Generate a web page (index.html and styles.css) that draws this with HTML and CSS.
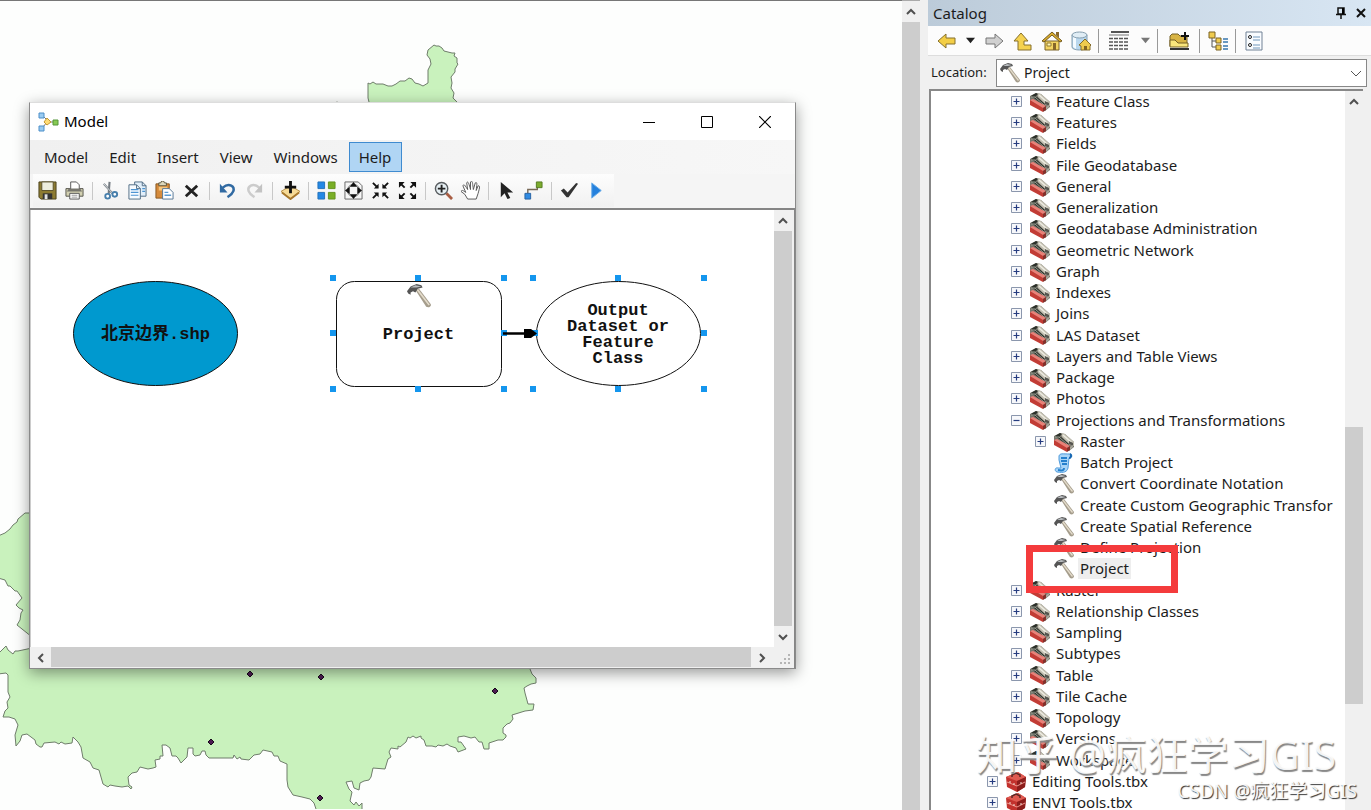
FILE: index.html
```html
<!DOCTYPE html>
<html lang="en">
<head>
<meta charset="utf-8">
<title>Model</title>
<link rel="stylesheet" href="styles.css">
</head>
<body>
<svg class="sprite" aria-hidden="true">
  <symbol id="toolset" viewBox="0 0 20 20">
    <path d="M0 4l6-3 5 1 9 8v5l-5 4L0 11z" fill="#77766c"/>
    <path d="M7 1l4 1 9 8v4l-4-1L8 5z" fill="#c3c0b2"/>
    <path d="M1 4l5-3 2 1-4 4zM4 6l3-1 8 7-2 1z" fill="#2c302a"/>
    <path d="M1 5l4 0 9 8" stroke="#9aa094" fill="none"/>
    <path d="M9 3l8 7" stroke="#eeece2" stroke-width="1.500"/><path d="M15 9l4 2v3l-4-2z" fill="#55554f"/>
    <path d="M0 8l13 7v5L0 13z" fill="#c23c35"/><path d="M0 8l3-1 13 7-3 2z" fill="#e98178"/><path d="M13 16l3-2v4l-3 2z" fill="#84302b"/><path d="M16 15l3-2v2l-3 3z" fill="#a8a69b"/>
  </symbol>
  <symbol id="hammer" viewBox="0 0 20 20">
    <path d="M7 5l3-1 10 13c0 2-2 3-4 2z" fill="#a59d8c"/><path d="M8 5l1-1 10 13-1 1z" fill="#e4dccb"/>
    <path d="M0 6l3-4 5-2 4 1 1 2-4 1-2 3-2-1-2 1v2L1 8z" fill="#555"/><path d="M3 3l4-2 5 1-4 1z" fill="#b8bcbf"/>
  </symbol>
  <symbol id="script" viewBox="0 0 20 20">
    <path d="M5 3c1-3 3-2 11-2 3 1 2 4-1 4l-1 10c-1 4-4 5-11 4-3-1-2-5 1-4h3L5 7z" fill="#a9d5f7" stroke="#4e9bdc"/>
    <path d="M7 5h6M7 8h6M8 11h5M4 17c5 1 6 0 6-2" stroke="#2580cd" stroke-width="2" fill="none"/><path d="M16 1c2 1 1 4-1 4" stroke="#1767b2" stroke-width="2" fill="none"/>
  </symbol>
  <symbol id="toolbox" viewBox="0 0 20 20">
    <path d="M0 5l12-5 8 5-1 10-8 5L1 15z" fill="#c2322d"/><path d="M0 5l12-5 8 5-9 4z" fill="#df5a51"/><path d="M11 9l9-4-1 10-8 5z" fill="#8b1d1b"/>
    <path d="M6 5V3l4-2 4 2v2" fill="none" stroke="#5c2826" stroke-width="1.500"/><path d="M1 10l10 4 8-4" stroke="#ef938a" fill="none"/><path d="M4 9v2M8 11v2M15 10v2" stroke="#eee0d8"/>
  </symbol>
  <symbol id="plus" viewBox="0 0 11 11"><path d="M.5.5h10v10H.5z" fill="#f7f8fb" stroke="#8b97ad"/><path d="M2.500 5.500h6M5.500 2.500v6" stroke="#263c80" stroke-width="1.200"/></symbol>
  <symbol id="minus" viewBox="0 0 11 11"><path d="M.5.5h10v10H.5z" fill="#f7f8fb" stroke="#8b97ad"/><path d="M2.500 5.500h6" stroke="#263c80" stroke-width="1.200"/></symbol>
  <symbol id="up" viewBox="0 0 12 12"><path d="M2 8l4-4 4 4" fill="none" stroke="#505050" stroke-width="2"/></symbol>
  <symbol id="down" viewBox="0 0 12 12"><path d="M2 4l4 4 4-4" fill="none" stroke="#505050" stroke-width="2"/></symbol>
  <symbol id="left" viewBox="0 0 12 12"><path d="M8 2L4 6l4 4" fill="none" stroke="#505050" stroke-width="2"/></symbol>
  <symbol id="right" viewBox="0 0 12 12"><path d="M4 2l4 4-4 4" fill="none" stroke="#505050" stroke-width="2"/></symbol>
</svg>

<div class="app">
  <main class="map">
    <svg class="land" aria-label="Map">
      <g fill="#c9f2bd" stroke="#6f7d6b">
        <path d="M370 106L368 98 368 83 370 84 373 82 376 84 383 84 388 86 392 86 396 84 400 81 405 81 409 78 412 79 415 83 419 84 423 86 428 83 428 70 431 64 430 59 427 55 428 50 434 45 436 46 439 46 442 48 444 51 452 53 455 53 454 56 457 58 457 63 458 64 455 69 455 72 451 77 452 83 451 88 454 93 453 98 458 103V108z"/>
        <path d="M32 513H25L18 519 17 522 13 525 10 529 5 533-2 536V578L5 580 8 586 10 586 15 591 17 591 22 598 16 605 19 608 23 610 21 613 20 620 17 625 22 629 32 637z"/>
        <path d="M-2 652L0 652 3 649 6 646 8 650 13 654 15 651 18 651 32 648V660H530V669L532 674 536 678 536 683 531 684 527 686 524 688 525 693 528 704 534 704 533 710 525 711 512 715 513 719 510 723 507 724 503 728 503 733 506 735 506 737 503 740 498 740 489 743 489 749 484 749 482 742 479 742 475 737 471 738 464 736 458 737 458 742 461 742 466 749 458 752 456 748 450 746 447 744 443 746 438 745 436 747 432 746 426 746 424 740 421 738 421 736 416 738 413 736 410 738 408 737 406 742 400 747 398 746 398 749 391 748 389 752 391 757 388 759 385 769 373 768 371 777 369 780 364 781 360 783 359 790 354 788 352 781 346 782 349 789 352 792 350 801 354 805 356 802 359 806 362 803V812H317L314 803 310 799 302 797 293 795 288 787 287 780V764L280 761 278 756 274 756 272 752 263 750 260 754 254 755 249 760 241 759 240 757 237 759 234 755 233 758H209L206 755 205 751 202 751 200 755 195 756 193 754 193 748 188 748 187 757 184 760 181 763 178 758 176 756 172 756 170 748 166 745 162 745 163 756 160 756 160 759 155 760 156 767 153 768 148 769 140 767 137 772 132 773 128 777 129 785 132 787 131 789 128 786 122 787 115 786 110 785 108 787 103 784 99 770 93 768 90 762 83 758 81 747 78 742 73 737 72 743 65 744 61 742 59 744 55 742 44 743 42 747 40 747 36 744 35 740 27 734 22 735 20 741 16 746 15 735 18 725 15 719 9 717 3 717 5 711 8 708 7 702 10 697 8 692 8 675 6 673-2 674z"/>
      </g>
      <path d="M335 104q2-4 4 0" fill="none" stroke="#6f7d6b"/>
      <g fill="#4d1b52" stroke="#17091a">
        <path d="M250 671l3 3-3 3-3-3zM321 674l3 3-3 3-3-3zM495 688l3 3-3 3-3-3zM211 739l3 3-3 3-3-3zM320 795l3 3-3 3-3-3z"/>
      </g>
    </svg>

    <section class="window" aria-label="Model">
      <header class="titlebar">
        <svg width="22" height="20" viewBox="0 0 22 20"><path d="M5 4l5 5-5 6M12 10h3" fill="none" stroke="#777"/><path d="M1 1h5v5H1zM1 14h5v5H1z" fill="#9acbf1" stroke="#4d8fc9"/><path d="M9 6l4 4-4 3-3-3z" fill="#ffdc76" stroke="#c49832"/><path d="M15 8h5v5h-5z" fill="#87c953" stroke="#55963a"/></svg>
        <h1>Model</h1>
        <button aria-label="Minimize"><svg width="12" height="12"><path d="M0 6.500h12" stroke="#000"/></svg></button>
        <button aria-label="Maximize"><svg width="12" height="12"><path d="M.5.5h11v11H.5z" fill="none" stroke="#000"/></svg></button>
        <button aria-label="Close"><svg width="12" height="12"><path d="M0 0l12 12M12 0L0 12" stroke="#000" stroke-width="1.200"/></svg></button>
      </header>
      <nav class="menu">
        <button>Model</button><button>Edit</button><button>Insert</button><button>View</button><button>Windows</button><button class="active">Help</button>
      </nav>
      <div class="tools">
        <button aria-label="Save"><svg viewBox="0 0 20 20"><path d="M1 1h18v18H3l-2-2z" fill="#8d7b32" stroke="#4c421c"/><path d="M4 1h12v9H4z" fill="#eeeede" stroke="#5a502a"/><path d="M5 13h10v6H5z" fill="#333"/><path d="M7 14h3v5H7z" fill="#e3e3e3"/></svg></button>
        <button aria-label="Print"><svg viewBox="0 0 20 20"><path d="M1 8h18v8H1z" fill="#d2d0b1" stroke="#55544c"/><path d="M6 9V1h6l3 3v5z" fill="#fff" stroke="#555"/><path d="M4 8h12l2 3H2z" fill="#77766e"/><path d="M5 13h10v6H5z" fill="#fff" stroke="#555"/><path d="M7 15h6M7 17h6" stroke="#999"/></svg></button>
        <i></i>
        <button aria-label="Cut"><svg viewBox="0 0 20 20"><path d="M3 3l9 10M9 1l-1 13" stroke="#737a80" stroke-width="2.200"/><path d="M3 3l9 10" stroke="#d8dde0"/><circle cx="7" cy="16" r="2.500" fill="#fff" stroke="#477fac" stroke-width="2"/><circle cx="14.500" cy="14" r="2.500" fill="#fff" stroke="#477fac" stroke-width="2"/></svg></button>
        <button aria-label="Copy"><svg viewBox="0 0 20 20"><path d="M7 1h8l4 4v11H7z" fill="#e2effa" stroke="#4f6b84"/><path d="M1 4h8l4 4v11H1z" fill="#f7fbff" stroke="#4f6b84"/><path d="M9 4v4h4M15 1v4h4" fill="none" stroke="#4f6b84"/><path d="M3 9h8M3 12h8M3 15h8M15 8h3M15 11h3" stroke="#4d94d2" stroke-width="1.300"/></svg></button>
        <button aria-label="Paste"><svg viewBox="0 0 20 20"><path d="M1 3h14v15H1z" fill="#d68b3c" stroke="#875621"/><path d="M4 5h8V2h-2L9 0H7L6 2H4z" fill="#ddd8bd" stroke="#5b5339"/><path d="M4 6h9v4H4z" fill="#f4c680"/><path d="M8 8h7l4 4v7H8z" fill="#fff" stroke="#547694"/><path d="M10 12h4M10 15h7" stroke="#5d9bd1" stroke-width="1.500"/></svg></button>
        <button aria-label="Delete"><svg viewBox="0 0 20 20"><path d="M4 5l12 11M16 5L4 16" stroke="#222" stroke-width="3"/></svg></button>
        <i></i>
        <button aria-label="Undo"><svg viewBox="0 0 20 20"><path d="M5 7c7-6 13-1 11 4-1 3-3 4-6 6" fill="none" stroke="#316aa2" stroke-width="2.600"/><path d="M2 3v9h8z" fill="#316aa2"/></svg></button>
        <button aria-label="Redo"><svg viewBox="0 0 20 20"><path d="M15 7C8 1 2 6 4 11c1 3 3 4 6 6" fill="none" stroke="#ccc" stroke-width="2.600"/><path d="M18 3v9h-8z" fill="#c3c3c3"/></svg></button>
        <i></i>
        <button aria-label="Add data"><svg viewBox="0 0 20 20"><path d="M0 11l10-6 10 6-10 8z" fill="#f6da96" stroke="#b48b43"/><path d="M1 12l9 7 9-7" fill="none" stroke="#a7772b" stroke-width="2"/><path d="M10 0v13M4 6.500h12" stroke="#111" stroke-width="3"/></svg></button>
        <i></i>
        <button aria-label="Auto layout"><svg viewBox="0 0 20 20"><path d="M1 1h7v7H1zM1 12h7v7H1z" fill="#2388e5" stroke="#2271b8"/><path d="M12 1h7v7h-7zM12 12h7v7h-7z" fill="#79ae26" stroke="#63911e"/></svg></button>
        <button aria-label="Full extent"><svg viewBox="0 0 20 20"><path d="M1 1h14l4 4v14H1z" fill="#f5f5f5" stroke="#666"/><circle cx="10" cy="10" r="6.500" fill="none" stroke="#777"/><path d="M10 1l4 5H6zM10 19l4-5H6zM1 10l5-4v8zM19 10l-5-4v8z" fill="#111"/></svg></button>
        <button aria-label="Fixed zoom in"><svg viewBox="0 0 20 20"><path d="M2 2l5 5M18 2l-5 5M2 18l5-5M18 18l-5-5" stroke="#111" stroke-width="2"/><path d="M8 3v5H3zM12 3v5h5zM8 17v-5H3zM12 17v-5h5z" fill="#111"/></svg></button>
        <button aria-label="Fixed zoom out"><svg viewBox="0 0 20 20"><path d="M3 3l4 4M17 3l-4 4M3 17l4-4M17 17l-4-4" stroke="#111" stroke-width="2"/><path d="M1 1h6L1 7zM19 1h-6l6 6zM1 19h6l-6-6zM19 19h-6l6-6z" fill="#111"/></svg></button>
        <i></i>
        <button aria-label="Zoom"><svg viewBox="0 0 20 20"><path d="M13 13l6 6" stroke="#a85d43" stroke-width="3"/><circle cx="8" cy="8" r="6.500" fill="#e7f0f4" stroke="#595d60" stroke-width="1.500"/><path d="M8 4v8M4 8h8" stroke="#222" stroke-width="2"/></svg></button>
        <button aria-label="Pan"><svg viewBox="0 0 20 20"><path d="M7 19L4 14 0 11c1-2 2-1 5 1L2 5c1-2 2-1 5 4L6 2c1-2 2-1 4 7V1c2-2 2 0 3 8l2-7c2-1 2 0 1 8l2-5c2 0 2 1 0 8l-2 6z" fill="#fff" stroke="#555"/></svg></button>
        <i></i>
        <button aria-label="Select"><svg viewBox="0 0 20 20"><path d="M4 1v16l4-4 3 6 3-1-3-6h6z" fill="#222"/></svg></button>
        <button aria-label="Connect"><svg viewBox="0 0 20 20"><path d="M4 13V9h10V5" fill="none" stroke="#796a58" stroke-width="1.500"/><path d="M1 13h6v6H1z" fill="#318be2" stroke="#2561a2"/><path d="M13 1h6v6h-6z" fill="#7dac2e" stroke="#557b22"/></svg></button>
        <i></i>
        <button aria-label="Validate"><svg viewBox="0 0 20 20"><path d="M1 10l3-2 4 4 9-10 2 1L9 17H7z" fill="#333"/></svg></button>
        <button aria-label="Run"><svg viewBox="0 0 20 20"><path d="M5 2l10 8-10 8z" fill="#2581dd" stroke="#6caee9"/></svg></button>
      </div>
      <div class="workspace">
        <div class="canvas">
          <svg class="shapes" width="740" height="438">
            <g stroke="#111" fill="#fff"><ellipse cx="124.500" cy="123.500" rx="82" ry="52" fill="#0099cf"/><rect x="305.500" y="71.500" width="165" height="105" rx="18"/><ellipse cx="587.500" cy="123.500" rx="82" ry="52"/></g>
            <path d="M299 65h6v6h-6zM384 65h6v6h-6zM470 65h6v6h-6zM299 120h6v6h-6zM470 120h6v6h-6zM299 176h6v6h-6zM384 176h6v6h-6zM470 176h6v6h-6zM499 65h6v6h-6zM584 65h6v6h-6zM670 65h6v6h-6zM499 176h6v6h-6zM584 176h6v6h-6zM670 176h6v6h-6zM501 120h6v6h-6zM670 120h6v6h-6z" fill="#1496ee"/>
            <path d="M472 123.500h24" stroke="#000" stroke-width="2.500"/><path d="M493 119h7l6 4.500-6 4.500h-7z"/>
            <use href="#hammer" x="376" y="74" width="24" height="24"/>
          </svg>
          <div class="node data">北京边界.shp</div>
          <div class="node tool">Project</div>
          <div class="node output">Output Dataset or Feature Class</div>
        </div>
        <div class="vbar"><button aria-label="Scroll up"><svg><use href="#up"/></svg></button><b></b><button aria-label="Scroll down"><svg><use href="#down"/></svg></button></div>
        <div class="hbar"><button aria-label="Scroll left"><svg><use href="#left"/></svg></button><b></b><button aria-label="Scroll right"><svg><use href="#right"/></svg></button></div>
        <svg class="grip" width="12" height="12"><path d="M9 1h2v2H9zM5 5h2v2H5zM9 5h2v2H9zM1 9h2v2H1zM5 9h2v2H5zM9 9h2v2H9z" fill="#b5b5b5"/></svg>
      </div>
    </section>
  </main>
  <div class="vbar mapbar"><button aria-label="Scroll map up"><svg><use href="#up"/></svg></button><b></b></div>

  <aside class="catalog">
    <header class="cathead"><h2>Catalog</h2>
      <button aria-label="Pin"><svg width="12" height="12" viewBox="0 0 12 12"><path d="M3 1h6v6H3zM1 7.500h10M6 8v4" fill="none" stroke="#111" stroke-width="1.500"/><path d="M7 1h2v6H7z"/></svg></button>
      <button aria-label="Close catalog"><svg width="12" height="12"><path d="M2 2l8 8M10 2l-8 8" stroke="#111" stroke-width="2"/></svg></button>
    </header>
    <div class="cattools">
      <button aria-label="Back"><svg viewBox="0 0 20 20"><path d="M1 10l8-7v4h9v6H9v4z" fill="#f3ce46" stroke="#86702c"/></svg></button>
      <button class="drop" aria-label="History"><svg viewBox="0 0 10 10"><path d="M0 2h10L5 8z" fill="#222"/></svg></button>
      <button aria-label="Forward"><svg viewBox="0 0 20 20"><path d="M19 10l-8-7v4H2v6h9v4z" fill="#d0d0d0" stroke="#777"/></svg></button>
      <button aria-label="Up one level"><svg viewBox="0 0 20 20"><path d="M8 2l7 8h-4v4h7v5H5v-9H1z" fill="#f5d250" stroke="#87702c"/></svg></button>
      <button aria-label="Home"><svg viewBox="0 0 20 20"><path d="M3 10h14v9H3z" fill="#f3d462" stroke="#7d6528"/><path d="M0 10L10 1l10 9-2 1-8-7-8 7z" fill="#dcae2d" stroke="#72591f"/><path d="M14 1h3v6l-3-3zM11 12h3v7h-3z" fill="#87672a"/><path d="M5 12h4v3H5z" fill="#fff6b9" stroke="#937b31"/></svg></button>
      <button aria-label="Default geodatabase"><svg viewBox="0 0 20 20"><path d="M1 4v12c0 4 15 4 15 0V4z" fill="#b9d7ed" stroke="#859eaf"/><path d="M2 6v10l3 2V6z" fill="#f3faff"/><ellipse cx="8.500" cy="4" rx="7.500" ry="3" fill="#e0edf5" stroke="#859eaf"/><path d="M8 14l6-6 6 6-1 1v4h-9v-4z" fill="#efca4e" stroke="#856c2a"/><path d="M13 15h3v4h-3z" fill="#846522"/></svg></button>
      <i></i>
      <button aria-label="Contents view" class="wide"><svg viewBox="0 0 20 20"><path d="M2 1h18" stroke="#555" stroke-width="2"/><path d="M0 4h20" stroke="#777"/><path d="M0 7.500h20M0 11h20M0 14.500h20M0 18h20" stroke="#555" stroke-width="1.500" stroke-dasharray="4 1"/></svg></button>
      <button class="drop" aria-label="View options"><svg viewBox="0 0 10 10"><path d="M0 2h10L5 8z" fill="#777"/></svg></button>
      <i></i>
      <button aria-label="Connect folder" class="connect"><svg viewBox="0 0 20 20"><path d="M1 5l2-2h6l2 2h7v10H1z" fill="#d8b444" stroke="#756126"/><path d="M1 9h5l3 3h10v4H1z" fill="#f8e57c" stroke="#756126"/><path d="M1 18h19" stroke="#333" stroke-width="2"/><path d="M16 1v8M12 5h8" stroke="#111" stroke-width="2"/></svg></button>
      <i></i>
      <button aria-label="Toggle tree"><svg viewBox="0 0 20 20"><path d="M4 7v9h4M4 10h4" fill="none" stroke="#555"/><path d="M1 1h6v6H1zM8 7h5v5H8zM8 14h5v5H8z" fill="#efcb4e" stroke="#7a6224"/><path d="M15 8h5M15 11h5M15 15h5M15 18h5" stroke="#3977ad" stroke-width="1.500"/></svg></button>
      <i></i>
      <button aria-label="Options"><svg viewBox="0 0 20 20"><path d="M2 1h16v18H2z" fill="#f9fcff" stroke="#718195"/><path d="M9 6h7M9 9h7M9 14h7M9 17h7" stroke="#7098bc"/><circle cx="6" cy="6" r="1.500" fill="none" stroke="#222"/><circle cx="6" cy="14" r="1.500" fill="none" stroke="#222"/></svg></button>
    </div>
    <div class="location"><label for="loc">Location:</label>
      <div class="combo"><svg width="20" height="20"><use href="#hammer"/></svg><select id="loc"><option>Project</option></select><svg class="chev" width="12" height="12" viewBox="0 0 12 12"><path d="M1 4l5 5 5-5" fill="none" stroke="#555"/></svg></div>
    </div>
    <div class="treebox">
      <ul class="tree">
        <li><svg class="exp"><use href="#plus"/></svg><svg><use href="#toolset"/></svg><span>Feature Class</span></li>
        <li><svg class="exp"><use href="#plus"/></svg><svg><use href="#toolset"/></svg><span>Features</span></li>
        <li><svg class="exp"><use href="#plus"/></svg><svg><use href="#toolset"/></svg><span>Fields</span></li>
        <li><svg class="exp"><use href="#plus"/></svg><svg><use href="#toolset"/></svg><span>File Geodatabase</span></li>
        <li><svg class="exp"><use href="#plus"/></svg><svg><use href="#toolset"/></svg><span>General</span></li>
        <li><svg class="exp"><use href="#plus"/></svg><svg><use href="#toolset"/></svg><span>Generalization</span></li>
        <li><svg class="exp"><use href="#plus"/></svg><svg><use href="#toolset"/></svg><span>Geodatabase Administration</span></li>
        <li><svg class="exp"><use href="#plus"/></svg><svg><use href="#toolset"/></svg><span>Geometric Network</span></li>
        <li><svg class="exp"><use href="#plus"/></svg><svg><use href="#toolset"/></svg><span>Graph</span></li>
        <li><svg class="exp"><use href="#plus"/></svg><svg><use href="#toolset"/></svg><span>Indexes</span></li>
        <li><svg class="exp"><use href="#plus"/></svg><svg><use href="#toolset"/></svg><span>Joins</span></li>
        <li><svg class="exp"><use href="#plus"/></svg><svg><use href="#toolset"/></svg><span>LAS Dataset</span></li>
        <li><svg class="exp"><use href="#plus"/></svg><svg><use href="#toolset"/></svg><span>Layers and Table Views</span></li>
        <li><svg class="exp"><use href="#plus"/></svg><svg><use href="#toolset"/></svg><span>Package</span></li>
        <li><svg class="exp"><use href="#plus"/></svg><svg><use href="#toolset"/></svg><span>Photos</span></li>
        <li><svg class="exp"><use href="#minus"/></svg><svg><use href="#toolset"/></svg><span>Projections and Transformations</span></li>
        <li class="child"><svg class="exp"><use href="#plus"/></svg><svg><use href="#toolset"/></svg><span>Raster</span></li>
        <li class="leaf"><svg><use href="#script"/></svg><span>Batch Project</span></li>
        <li class="leaf"><svg><use href="#hammer"/></svg><span>Convert Coordinate Notation</span></li>
        <li class="leaf"><svg><use href="#hammer"/></svg><span>Create Custom Geographic Transfor</span></li>
        <li class="leaf"><svg><use href="#hammer"/></svg><span>Create Spatial Reference</span></li>
        <li class="leaf"><svg><use href="#hammer"/></svg><span>Define Projection</span></li>
        <li class="leaf current"><svg><use href="#hammer"/></svg><span>Project</span></li>
        <li><svg class="exp"><use href="#plus"/></svg><svg><use href="#toolset"/></svg><span>Raster</span></li>
        <li><svg class="exp"><use href="#plus"/></svg><svg><use href="#toolset"/></svg><span>Relationship Classes</span></li>
        <li><svg class="exp"><use href="#plus"/></svg><svg><use href="#toolset"/></svg><span>Sampling</span></li>
        <li><svg class="exp"><use href="#plus"/></svg><svg><use href="#toolset"/></svg><span>Subtypes</span></li>
        <li><svg class="exp"><use href="#plus"/></svg><svg><use href="#toolset"/></svg><span>Table</span></li>
        <li><svg class="exp"><use href="#plus"/></svg><svg><use href="#toolset"/></svg><span>Tile Cache</span></li>
        <li><svg class="exp"><use href="#plus"/></svg><svg><use href="#toolset"/></svg><span>Topology</span></li>
        <li><svg class="exp"><use href="#plus"/></svg><svg><use href="#toolset"/></svg><span>Versions</span></li>
        <li><svg class="exp"><use href="#plus"/></svg><svg><use href="#toolset"/></svg><span>Workspace</span></li>
        <li class="root"><svg class="exp"><use href="#plus"/></svg><svg><use href="#toolbox"/></svg><span>Editing Tools.tbx</span></li>
        <li class="root"><svg class="exp"><use href="#plus"/></svg><svg><use href="#toolbox"/></svg><span>ENVI Tools.tbx</span></li>
      </ul>
      <div class="vbar treebar"><button aria-label="Scroll tree up"><svg><use href="#up"/></svg></button><b></b></div>
    </div>
  </aside>
  <div class="mark zhihu">知乎 @疯狂学习GIS</div>
  <div class="mark csdn">CSDN @疯狂学习GIS</div>
</div>
</body>
</html>
```
FILE: styles.css
```css
*, *::after { box-sizing: border-box; }
body { margin: 0; font: 15px/21px "Noto Sans", "Noto Sans CJK SC", sans-serif; color: #1c1c1c; }
button { border: 0; padding: 0; background: none; font: inherit; color: inherit; display: flex; align-items: center; justify-content: center; }
h1, h2 { margin: 0; font-size: 15px; font-weight: 400; }
svg { flex: none; }
.sprite { position: absolute; width: 0; height: 0; }
.app { position: relative; display: flex; height: 100vh; overflow: hidden; background: #f0f0f0; }

.map { position: relative; flex: 1; min-width: 0; overflow: hidden; background: #fdfefd; border-top: 1px solid #777; }
.land { position: absolute; inset: -1px 0 0; width: 100%; height: 100%; }

.window { position: absolute; left: 29px; top: 101px; width: 767px; height: 567px; display: flex; flex-direction: column; background: #f5f5f5; border: 1px solid #8a8a8a; border-top-color: #ddd; box-shadow: 0 4px 14px rgba(0, 0, 0, .4); }
.titlebar { display: flex; align-items: center; height: 37px; padding: 0 1px 0 8px; background: #fff; color: #000; }
.titlebar h1 { flex: 1; padding-left: 4px; }
.titlebar button { width: 58px; height: 37px; }
.menu { display: flex; height: 34px; padding: 2px 4px; background: linear-gradient(90deg, #f0f0f0, #f7f7f7); }
.menu button { height: 30px; padding: 0 10px 0 9px; border: 1px solid transparent; }
.menu .active { background: #b0d5f4; border-color: #3f8bd0; }
.tools { display: flex; align-items: center; align-self: flex-start; height: 33px; padding: 0 4px 0 1px; margin: 0 0 1px 3px; background: linear-gradient(#fdfdfd, #f1f1f1); }
.tools button { width: 27px; height: 28px; }
.tools button svg { width: 19px; height: 19px; }
.tools i { width: 1px; height: 18px; margin: 0 4px; background: #c8c8c8; }
.workspace { flex: 1; min-height: 0; display: grid; grid-template: minmax(0, 1fr) 21px / minmax(0, 1fr) 20px; border-top: 2px solid #858585; border-right: 1px solid #858585; background: #f0f0f0; }
.canvas { position: relative; overflow: hidden; background: #fff; border-left: 1px solid #ccc; }
.shapes { position: absolute; left: 0; top: 0; }
.node { position: absolute; display: flex; align-items: center; justify-content: center; text-align: center; font: bold 17px/16px "Liberation Mono", "Noto Sans CJK SC", monospace; color: #111; }
.data { left: 42px; top: 72px; width: 165px; height: 105px; }
.tool { left: 305px; top: 72px; width: 165px; height: 105px; }
.output { left: 531px; top: 72px; width: 112px; height: 105px; }

.vbar { display: flex; flex-direction: column; width: 18px; background: #f0f0f0; }
.vbar button { height: 21px; width: 18px; }
.vbar b { flex: 1; background: #cdcdcd; }
.vbar svg, .hbar svg { width: 12px; height: 12px; }
.hbar { display: flex; padding-right: 2px; background: #f0f0f0; }
.hbar button { width: 21px; }
.hbar b { flex: 1; margin-bottom: 1px; background: #cdcdcd; }
.grip { align-self: end; justify-self: end; margin: 3px; }
.mapbar { margin-right: 8px; border-top: 1px solid #aaa; }

.catalog { width: 443px; display: flex; flex-direction: column; background: #f0f0f0; }
.cathead { display: flex; align-items: center; height: 26px; padding-left: 5px; background: linear-gradient(90deg, #bccbd9, #d8e6f3); }
.cathead h2 { flex: 1; }
.cathead button { width: 20px; height: 24px; }
.cattools { display: flex; align-items: center; height: 29px; padding-left: 4px; background: #fcfcfc; }
.cattools button { width: 29px; height: 26px; }
.cattools svg { width: 20px; height: 20px; }
.cattools .drop { width: 18px; }
.cattools .drop svg { width: 9px; height: 9px; }
.cattools .wide { width: 34px; }
.cattools .wide svg { width: 22px; height: 20px; }
.cattools .connect { width: 35px; }
.cattools i { width: 1px; height: 24px; margin: 0 3px; background: #999; }
.location { display: flex; align-items: center; height: 34px; padding: 0 4px 0 3px; border-top: 1px solid #ddd; }
.location label { width: 65px; font-size: 13px; }
.combo { position: relative; flex: 1; display: flex; align-items: center; height: 28px; padding-left: 3px; background: #fff; border: 1px solid #888; }
.combo select { flex: 1; height: 26px; padding: 0 4px; border: 0; appearance: none; background: transparent; font: 14px "Noto Sans", sans-serif; color: #1c1c1c; }
.chev { position: absolute; right: 4px; pointer-events: none; }
.treebox { flex: 1; min-height: 0; display: flex; margin: 0 8px 0 1px; overflow: hidden; background: #fff; border: 2px solid #888; border-right: 0; border-bottom: 0; }
.tree { flex: 1; min-width: 0; height: 100%; overflow: hidden; margin: 0; padding: 0; list-style: none; }
.tree li { position: relative; display: flex; align-items: center; height: 21px; padding-left: 80px; white-space: nowrap; }
.tree li:nth-child(4n) { height: 22px; }
.tree svg { width: 20px; height: 20px; margin: 0 4px 0 8px; }
.tree .exp { width: 11px; height: 11px; margin: 0; }
.tree span { padding: 0 2px; }
.tree .child { padding-left: 104px; }
.tree .leaf { padding-left: 115px; }
.tree .root { padding-left: 56px; }
.current span { background: #eee; }
.current::after { content: ""; position: absolute; z-index: 1; left: 95px; top: -13px; width: 152px; height: 48px; border: 7px solid #f43b3c; }
.treebar button { height: 22px; }
.treebar b { flex: none; height: 277px; margin-top: 314px; }

.mark { position: absolute; z-index: 2; color: rgba(255, 255, 255, .92); font-family: "Noto Sans", "Noto Sans CJK SC", sans-serif; white-space: nowrap; }
.zhihu { right: 35px; bottom: 28px; font-size: 41px; line-height: 56px; text-shadow: 1px 2px 1px #888; }
.csdn { right: 14px; bottom: 6px; font-size: 19px; line-height: 26px; text-shadow: 1px 1px 1px #333; }
```
